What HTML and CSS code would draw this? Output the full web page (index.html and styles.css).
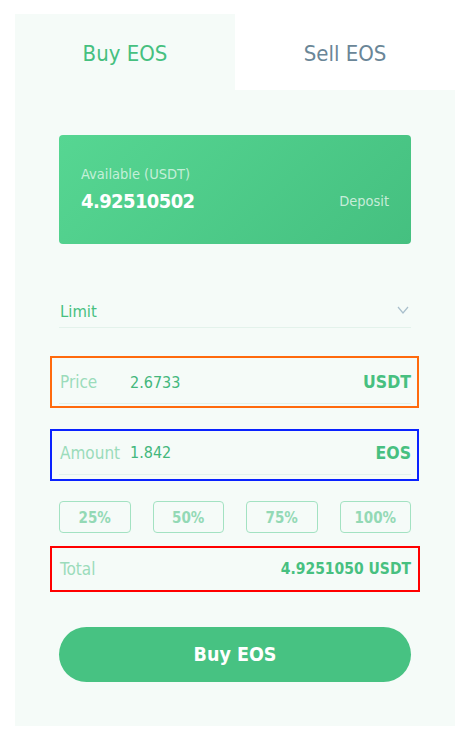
FILE: index.html
```html
<!DOCTYPE html>
<html>
<head>
<meta charset="utf-8">
<link rel="stylesheet" href="styles.css">
</head>
<body>
<div class="panel">
  <div class="tabs">
    <div class="tab active">Buy EOS</div>
    <div class="tab">Sell EOS</div>
  </div>
  <div class="content">
    <div class="card">
      <div class="card-label">Available (USDT)</div>
      <div class="card-row">
        <div class="card-value">4.92510502</div>
        <div class="card-link">Deposit</div>
      </div>
    </div>
    <div class="select">
      <span class="select-text">Limit</span>
      <svg class="chevron" width="12" height="8" viewBox="0 0 12 8"><path d="M1 1 L6 7 L11 1" fill="none" stroke="#a9bfcc" stroke-width="1.2"/></svg>
    </div>
    <div class="hl hl-orange">
      <div class="field field-price">
        <span class="field-label">Price</span>
        <span class="field-value">2.6733</span>
        <span class="field-unit">USDT</span>
      </div>
    </div>
    <div class="hl hl-blue">
      <div class="field field-amount">
        <span class="field-label">Amount</span>
        <span class="field-value">1.842</span>
        <span class="field-unit">EOS</span>
      </div>
    </div>
    <div class="pcts">
      <div class="pct">25%</div>
      <div class="pct">50%</div>
      <div class="pct">75%</div>
      <div class="pct">100%</div>
    </div>
    <div class="hl hl-red">
      <div class="total">
        <span class="field-label">Total</span>
        <span class="total-value">4.9251050 USDT</span>
      </div>
    </div>
    <div class="buy-btn">Buy EOS</div>
  </div>
</div>
</body>
</html>
```
FILE: styles.css
```css
* { box-sizing: border-box; }
body {
  margin: 0;
  background: #ffffff;
  font-family: "DejaVu Sans Condensed", "DejaVu Sans", sans-serif;
}
.panel {
  margin: 14px 0 0 15px;
  width: 440px;
  background: #f5fbf8;
}
.tabs {
  display: flex;
  height: 76px;
}
.tab {
  flex: 1;
  display: flex;
  align-items: center;
  justify-content: center;
  font-size: 22px;
  color: #6a8697;
  background: #ffffff;
  padding-top: 3px;
}
.tab.active {
  color: #46c07f;
  background: #f5fbf8;
}
.content {
  padding: 45px 44px 44px;
  display: flex;
  flex-direction: column;
}
.card {
  height: 109px;
  border-radius: 4px;
  background: linear-gradient(135deg, #56d692 0%, #45c080 100%);
  padding: 29px 22px 0;
  color: #ffffff;
}
.card-label {
  font-size: 14.5px;
  color: rgba(255,255,255,0.68);
  line-height: 20px;
}
.card-row {
  display: flex;
  align-items: center;
  justify-content: space-between;
  margin-top: 2px;
}
.card-value {
  font-size: 20px;
  font-weight: bold;
  letter-spacing: -0.6px;
  line-height: 30px;
}
.card-link {
  font-size: 14.5px;
  color: rgba(255,255,255,0.7);
}
.select {
  margin-top: 48px;
  height: 36px;
  border-bottom: 1px solid #e3f2eb;
  display: flex;
  align-items: center;
  justify-content: space-between;
  padding-top: 3px;
}
.select-text {
  font-size: 16.5px;
  color: #47c080;
  padding-left: 1px;
}
.chevron {
  margin-right: 2px;
  margin-top: -2px;
}
.hl {
  border: 2px solid;
  margin: 0 -8px 0 -9px;
  padding: 0 6px 0 7px;
}
.hl-orange {
  border-color: #ff6a0d;
  margin-top: 28px;
  padding-bottom: 2px;
}
.hl-blue {
  border-color: #0a22ff;
  margin-top: 21px;
  padding-bottom: 4px;
}
.hl-red {
  border-color: #ff0000;
  margin-top: 13px;
  margin-right: -9px;
  padding-right: 7px;
}
.field {
  display: flex;
  align-items: center;
  border-bottom: 1px solid #e3f2eb;
}
.field-price {
  height: 46px;
  padding-top: 3px;
}
.field-amount {
  height: 44px;
}
.field-label {
  font-size: 17px;
  color: #9bdcbb;
  width: 71px;
  padding-left: 1px;
  white-space: nowrap;
}
.field-value {
  font-size: 16px;
  color: #43b77c;
  flex: 1;
}
.field-unit {
  font-size: 17.5px;
  font-weight: bold;
  color: #47c080;
}
.pcts {
  margin-top: 20px;
  display: grid;
  grid-template-columns: repeat(4, 1fr);
  column-gap: 22px;
}
.pct {
  height: 32px;
  border: 1px solid #a3e2c2;
  border-radius: 4px;
  display: flex;
  align-items: center;
  justify-content: center;
  font-size: 15px;
  font-weight: bold;
  color: #93d9b5;
  padding-top: 2px;
}
.total {
  height: 42px;
  display: flex;
  align-items: center;
  justify-content: space-between;
}
.total-value {
  font-size: 15.5px;
  font-weight: bold;
  color: #47c080;
}
.buy-btn {
  margin-top: 35px;
  height: 55px;
  border-radius: 28px;
  background: #47c282;
  color: #ffffff;
  font-size: 19.5px;
  font-weight: bold;
  display: flex;
  align-items: center;
  justify-content: center;
}
```
